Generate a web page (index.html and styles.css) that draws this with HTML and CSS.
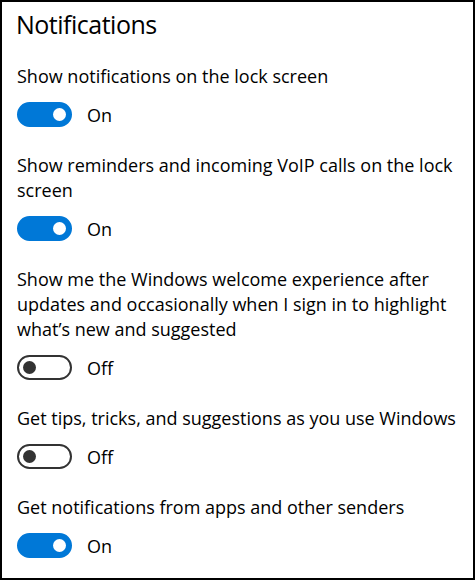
FILE: index.html
```html
<!DOCTYPE html>
<html lang="en">
<head>
    <meta charset="UTF-8">
    <title>Notifications</title>
    <link rel="stylesheet" href="styles.css">
</head>
<body>
    <div class="panel">
        <h1>Notifications</h1>

        <div class="setting">
            <p>Show notifications on the lock screen</p>
            <div class="toggle-row">
                <span class="toggle on"><span class="knob"></span></span>
                <span class="state">On</span>
            </div>
        </div>

        <div class="setting">
            <p>Show reminders and incoming VoIP calls on the lock screen</p>
            <div class="toggle-row">
                <span class="toggle on"><span class="knob"></span></span>
                <span class="state">On</span>
            </div>
        </div>

        <div class="setting">
            <p>Show me the Windows welcome experience after updates and occasionally when I sign in to highlight what’s new and suggested</p>
            <div class="toggle-row">
                <span class="toggle"><span class="knob"></span></span>
                <span class="state">Off</span>
            </div>
        </div>

        <div class="setting">
            <p>Get tips, tricks, and suggestions as you use Windows</p>
            <div class="toggle-row">
                <span class="toggle"><span class="knob"></span></span>
                <span class="state">Off</span>
            </div>
        </div>

        <div class="setting">
            <p>Get notifications from apps and other senders</p>
            <div class="toggle-row">
                <span class="toggle on"><span class="knob"></span></span>
                <span class="state">On</span>
            </div>
        </div>
    </div>
</body>
</html>
```

FILE: styles.css
```css
html, body {
    margin: 0;
    padding: 0;
}
body {
    font-family: 'Open Sans', 'Noto Sans', sans-serif;
    color: #000;
    background: #fff;
}
.panel {
    box-sizing: border-box;
    width: 475px;
    height: 580px;
    border: 2px solid #000;
    padding: 4px 8px 0 15px;
}
h1 {
    font-weight: 400;
    font-size: 25px;
    letter-spacing: -0.5px;
    line-height: 36px;
    margin: 0 0 22px -1px;
}
.setting {
    margin-bottom: 26px;
}
.setting p {
    margin: 0;
    font-size: 18px;
    line-height: 25px;
}
.toggle-row {
    display: flex;
    align-items: center;
    gap: 15px;
    margin-top: 13px;
}
.toggle {
    box-sizing: border-box;
    width: 55px;
    height: 25px;
    border-radius: 13px;
    border: 2px solid #333;
    background: #fff;
    display: flex;
    align-items: center;
    padding: 0 4px;
}
.toggle .knob {
    width: 13px;
    height: 13px;
    border-radius: 50%;
    background: #333;
}
.toggle.on {
    background: #0078d7;
    border-color: #0078d7;
    justify-content: flex-end;
}
.toggle.on .knob {
    background: #fff;
}
.state {
    font-size: 18px;
}
```
